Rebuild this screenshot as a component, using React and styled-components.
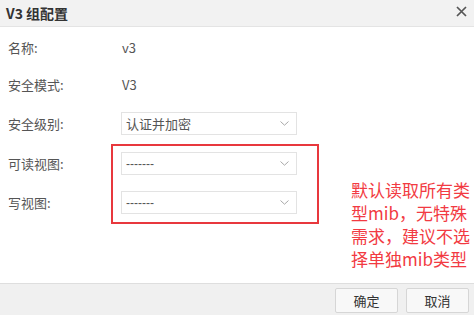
import React from "react";
import styled, { createGlobalStyle } from "styled-components";

const Global = createGlobalStyle`
  html, body { margin: 0; padding: 0; background: #fff; }
  body { font-family: "Noto Sans CJK SC", "Noto Sans", "Liberation Sans", sans-serif; }
  * { box-sizing: border-box; }
`;

const Dialog = styled.div`
  width: 474px;
  height: 315px;
  display: flex;
  flex-direction: column;
  background: #fff;
  overflow: hidden;
`;

const Header = styled.div`
  height: 27px;
  flex: none;
  display: flex;
  align-items: center;
  justify-content: space-between;
  padding: 0 6px 0 6px;
  background: #f2f2f2;
  border-bottom: 1px solid #e4e4e4;
`;

const Title = styled.div`
  font-size: 14px;
  font-weight: 700;
  color: #333;
  line-height: 1;
`;

const Close = styled.button`
  border: 0;
  background: transparent;
  padding: 0;
  width: 14px;
  height: 14px;
  margin-top: -4px;
  display: flex;
  align-items: center;
  justify-content: center;
`;

const Body = styled.div`
  flex: 1;
  display: flex;
  flex-direction: column;
  padding-top: 1px;
`;

const Row = styled.div`
  display: grid;
  grid-template-columns: 121px 1fr;
  align-items: center;
  height: ${(p) => p.$h}px;
`;

const Label = styled.div`
  padding-left: 8px;
  font-size: 13px;
  color: #555;
  line-height: 23px;
  height: 23px;
  white-space: nowrap;
`;

const Value = styled.div`
  font-size: 13px;
  color: #555;
  padding-left: 1px;
`;

const Select = styled.div`
  width: 176px;
  height: 23px;
  border: 1px solid #e3e3e3;
  background: #fff;
  display: flex;
  align-items: center;
  justify-content: space-between;
  padding: 0 7px 0 4px;
  font-size: 13px;
  color: #555;
`;

const Dashes = styled.span`
  font-family: "Liberation Sans", sans-serif;
  font-size: 12px;
  color: #555;
`;

const Group = styled.div`
  display: flex;
  align-items: flex-start;
`;

const GroupLabels = styled.div`
  width: 111px;
  flex: none;
  display: flex;
  flex-direction: column;
  gap: 16px;
  padding-top: 8px;
`;

const RedBox = styled.div`
  width: 208px;
  height: 80px;
  flex: none;
  border: 2px solid #e8383d;
  display: flex;
  flex-direction: column;
  gap: 16px;
  padding: 6px 0 0 8px;
`;

const Note = styled.div`
  margin: 34px 0 0 32px;
  font-size: 17px;
  line-height: 23px;
  color: #f23a42;
  white-space: nowrap;
`;

const Footer = styled.div`
  height: 32px;
  flex: none;
  background: #f0f0f0;
  border-top: 1px solid #dedede;
  display: flex;
  justify-content: flex-end;
  align-items: flex-start;
  gap: 8px;
  padding: 4px 5px 0 0;
`;

const Button = styled.button`
  width: 63px;
  height: 25px;
  border: 1px solid #d6d6d6;
  border-radius: 2px;
  background: #f8f8f8;
  font-family: inherit;
  font-size: 13px;
  color: #333;
  padding: 0;
`;

const Chevron = () => (
  <svg width="9" height="5" viewBox="0 0 9 5">
    <path d="M0.5 0.5 L4.5 4.2 L8.5 0.5" fill="none" stroke="#a8a8a8" strokeWidth="1" />
  </svg>
);

export default function App() {
  return (
    <>
      <Global />
      <Dialog>
        <Header>
          <Title>V3 组配置</Title>
          <Close aria-label="close">
            <svg width="11" height="11" viewBox="0 0 11 11">
              <path d="M1 1 L10 10 M10 1 L1 10" stroke="#555" strokeWidth="1.7" />
            </svg>
          </Close>
        </Header>
        <Body>
          <Row $h={38}>
            <Label>名称:</Label>
            <Value>v3</Value>
          </Row>
          <Row $h={37}>
            <Label>安全模式:</Label>
            <Value>V3</Value>
          </Row>
          <Row $h={41}>
            <Label>安全级别:</Label>
            <Select>
              <span>认证并加密</span>
              <Chevron />
            </Select>
          </Row>
          <Group>
            <GroupLabels>
              <Label>可读视图:</Label>
              <Label>写视图:</Label>
            </GroupLabels>
            <RedBox>
              <Select>
                <Dashes>-------</Dashes>
                <Chevron />
              </Select>
              <Select>
                <Dashes>-------</Dashes>
                <Chevron />
              </Select>
            </RedBox>
            <Note>
              默认读取所有类
              <br />
              型mib，无特殊
              <br />
              需求，建议不选
              <br />
              择单独mib类型
            </Note>
          </Group>
        </Body>
        <Footer>
          <Button>确定</Button>
          <Button>取消</Button>
        </Footer>
      </Dialog>
    </>
  );
}
